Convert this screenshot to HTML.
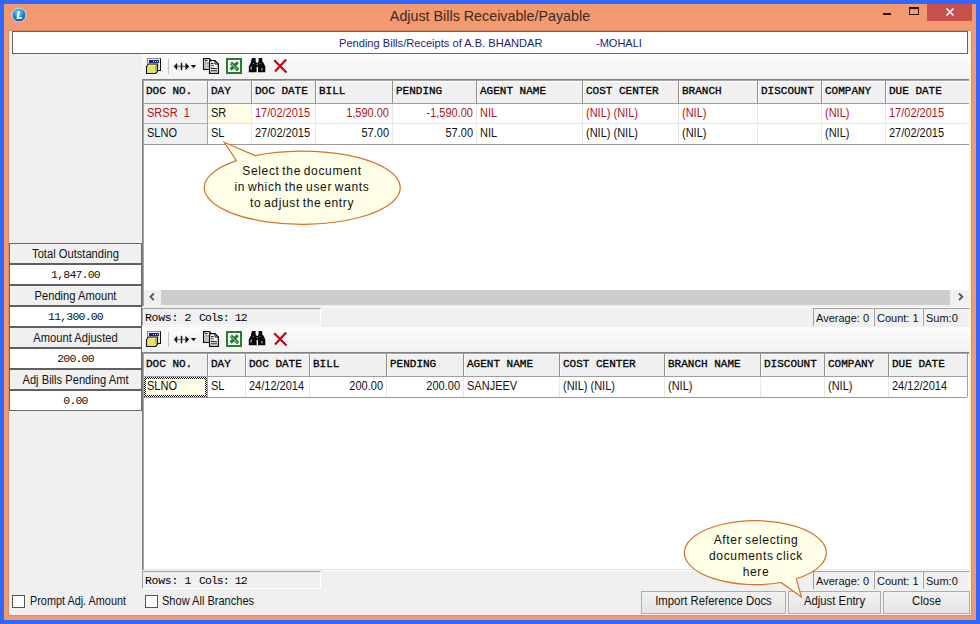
<!DOCTYPE html><html><head><meta charset="utf-8"><style>
*{box-sizing:border-box;margin:0;padding:0}
html,body{width:980px;height:624px;overflow:hidden;background:#3067ff;font-family:"Liberation Sans",sans-serif;position:relative}
div,span,svg{position:absolute}
.c{font-size:11px;white-space:nowrap;line-height:13px;color:#111}
.g{font-size:12px;white-space:nowrap;line-height:13px;color:#111;transform:scaleX(0.917);transform-origin:0 0}
.gr{transform-origin:100% 0}
.h{font-family:"Liberation Mono",monospace;font-size:11px;color:#000;-webkit-text-stroke:0.3px #000;line-height:13px;white-space:nowrap}
.m{font-family:"Liberation Mono",monospace;font-size:11px;line-height:13px;white-space:nowrap;color:#111}
.red{color:#b0121c}
.bx{background:#fff}
</style></head><body>
<div style="left:4px;top:4px;width:972px;height:616px;background:#f2996f;"></div>
<div style="left:8px;top:30px;width:964px;height:586px;background:#d98d68;"></div>
<div style="left:9px;top:31px;width:962px;height:584px;background:#f0f0f0;border:1px solid #fbf1ec"></div>
<div style="left:0;top:8px;width:980px;text-align:center;font-size:14.3px;line-height:17px;color:#3c2a20;white-space:nowrap">Adjust Bills Receivable/Payable</div>
<svg style="left:11px;top:7px" width="17" height="17" viewBox="0 0 17 17">
<defs><radialGradient id="ig" cx="0.45" cy="0.3" r="0.7"><stop offset="0" stop-color="#7fd0ff"/><stop offset="0.6" stop-color="#1a7fd0"/><stop offset="1" stop-color="#0b5aa8"/></radialGradient></defs>
<circle cx="8" cy="8" r="6.9" fill="url(#ig)" stroke="#e0eef5" stroke-width="0.8"/>
<path d="M6.8 4.2 L9 4.2 L8 9.9 L11.2 9.9 L10.8 11.8 L5.5 11.8 Z" fill="#f4ffff"/>
</svg>
<div style="left:883px;top:13px;width:8px;height:2px;background:#2a1208;"></div>
<div style="left:909px;top:7px;width:10px;height:8px;border:1px solid #2a1208;border-top-width:2px"></div>
<div style="left:927px;top:4px;width:45px;height:17px;background:#c7504b;"></div>
<svg style="left:945px;top:7px" width="10" height="10" viewBox="0 0 10 10"><path d="M1.5 1.5 L8.5 8.5 M8.5 1.5 L1.5 8.5" stroke="#fff" stroke-width="1.6"/></svg>
<div style="left:12px;top:31px;width:956px;height:23px;background:#fff;border:1px solid #646464"></div>
<div class="c" style="left:339px;top:37px;color:#1c1c84;font-size:11.1px">Pending Bills/Receipts of A.B. BHANDAR</div>
<div class="c" style="left:596px;top:37px;color:#1c1c84">-MOHALI</div>
<div style="left:9px;top:243px;width:133px;height:1px;background:#6a6a6a;"></div>
<div style="left:9px;top:244px;width:1px;height:40px;background:#6a6a6a;"></div>
<div style="left:141px;top:244px;width:1px;height:40px;background:#6a6a6a;"></div>
<div style="left:10px;top:244px;width:131px;height:19px;background:#f0f0f0;"></div>
<div style="left:9px;top:263px;width:133px;height:2px;background:#606060;"></div>
<div style="left:10px;top:265px;width:131px;height:19px;background:#fff;"></div>
<div style="left:9px;top:284px;width:133px;height:2px;background:#606060;"></div>
<div class="c" style="left:10px;width:131px;text-align:center;top:248px;font-size:12px;transform:scaleX(0.93);transform-origin:50% 0">Total Outstanding</div>
<div class="m" style="left:10px;width:131px;text-align:center;top:268px;font-size:11.5px;letter-spacing:-0.8px">1,847.00</div>
<div style="left:9px;top:286px;width:1px;height:40px;background:#6a6a6a;"></div>
<div style="left:141px;top:286px;width:1px;height:40px;background:#6a6a6a;"></div>
<div style="left:10px;top:286px;width:131px;height:19px;background:#f0f0f0;"></div>
<div style="left:9px;top:305px;width:133px;height:2px;background:#606060;"></div>
<div style="left:10px;top:307px;width:131px;height:19px;background:#fff;"></div>
<div style="left:9px;top:326px;width:133px;height:2px;background:#606060;"></div>
<div class="c" style="left:10px;width:131px;text-align:center;top:290px;font-size:12px;transform:scaleX(0.93);transform-origin:50% 0">Pending Amount</div>
<div class="m" style="left:10px;width:131px;text-align:center;top:310px;font-size:11.5px;letter-spacing:-0.8px">11,300.00</div>
<div style="left:9px;top:328px;width:1px;height:40px;background:#6a6a6a;"></div>
<div style="left:141px;top:328px;width:1px;height:40px;background:#6a6a6a;"></div>
<div style="left:10px;top:328px;width:131px;height:19px;background:#f0f0f0;"></div>
<div style="left:9px;top:347px;width:133px;height:2px;background:#606060;"></div>
<div style="left:10px;top:349px;width:131px;height:19px;background:#fff;"></div>
<div style="left:9px;top:368px;width:133px;height:2px;background:#606060;"></div>
<div class="c" style="left:10px;width:131px;text-align:center;top:332px;font-size:12px;transform:scaleX(0.93);transform-origin:50% 0">Amount Adjusted</div>
<div class="m" style="left:10px;width:131px;text-align:center;top:352px;font-size:11.5px;letter-spacing:-0.8px">200.00</div>
<div style="left:9px;top:370px;width:1px;height:40px;background:#6a6a6a;"></div>
<div style="left:141px;top:370px;width:1px;height:40px;background:#6a6a6a;"></div>
<div style="left:10px;top:370px;width:131px;height:19px;background:#f0f0f0;"></div>
<div style="left:9px;top:389px;width:133px;height:2px;background:#606060;"></div>
<div style="left:10px;top:391px;width:131px;height:19px;background:#fff;"></div>
<div style="left:9px;top:410px;width:133px;height:1px;background:#6a6a6a;"></div>
<div class="c" style="left:10px;width:131px;text-align:center;top:374px;font-size:12px;transform:scaleX(0.93);transform-origin:50% 0">Adj Bills Pending Amt</div>
<div class="m" style="left:10px;width:131px;text-align:center;top:394px;font-size:11.5px;letter-spacing:-0.8px">0.00</div>
<div style="left:142px;top:54px;width:828px;height:25px;background:linear-gradient(#fcfcfc,#f2f2f2);"></div>
<svg style="left:0;top:0px" width="300" height="80" viewBox="0 0 300 80">
<rect x="147.5" y="58.5" width="13" height="12" fill="#ececec" stroke="#111"/>
<path d="M147.5 70.5 V58.5 H160.5" fill="none" stroke="#909090"/>
<rect x="149" y="60" width="10" height="3" fill="#18208a"/>
<rect x="153" y="61" width="1" height="1" fill="#dde"/><rect x="155" y="61" width="1" height="1" fill="#dde"/><rect x="157" y="61" width="1" height="1" fill="#dde"/>
<path d="M146.5 66.5 L148.5 64 L157.5 64 L157.5 71.5 L155.5 73.5 L146.5 73.5 Z" fill="#e4e46a" stroke="#111" stroke-width="1.1"/>
<rect x="155" y="65" width="2" height="6" fill="#b8b838"/>
<rect x="148" y="65" width="7" height="1" fill="#f4f4a0"/>
<rect x="168" y="59" width="1" height="15" fill="#c4c4c4"/>
<rect x="176" y="65.6" width="10" height="1.6" fill="#888"/>
<path d="M173.8 66.5 L177.2 62.8 L177.2 70.2 Z" fill="#111"/>
<path d="M189.2 66.5 L185.5 62.8 L185.5 70.2 Z" fill="#111"/>
<rect x="180.8" y="62.8" width="1.4" height="7.4" fill="#111"/>
<path d="M190.8 65 L196.2 65 L193.5 68.2 Z" fill="#111"/>
<path d="M203.6 58.6 H209.4 L211 60.2 V69.4 H203.6 Z" fill="#fff" stroke="#111" stroke-width="1.3"/>
<rect x="205" y="60" width="2.5" height="1.2" fill="#222"/>
<rect x="205" y="62.5" width="4" height="1" fill="#666"/><rect x="205" y="64.5" width="4" height="1" fill="#888"/><rect x="205" y="66.5" width="4" height="1" fill="#888"/>
<path d="M209.6 60.6 H215 L218.4 64 V73.4 H209.6 Z" fill="#fff" stroke="#111" stroke-width="1.3"/>
<path d="M215 60.6 V64 H218.4" fill="none" stroke="#111" stroke-width="1"/>
<rect x="211" y="63" width="2.5" height="1.2" fill="#222"/>
<rect x="211" y="65" width="3" height="1" fill="#777"/><rect x="211" y="66.5" width="3" height="1" fill="#999"/>
<rect x="211" y="68" width="6" height="1.2" fill="#333"/><rect x="211" y="70.2" width="6" height="1.2" fill="#333"/>
<rect x="227" y="59" width="14" height="14" fill="#fff" stroke="#2a7a34" stroke-width="2"/>
<path d="M230.8 62.8 L238.2 70.2" stroke="#237a2e" stroke-width="3.4"/>
<path d="M237.8 62.2 L230.6 69.6" stroke="#237a2e" stroke-width="3"/>
<path d="M230.8 63.2 L237.2 69.6" stroke="#cfe8cf" stroke-width="0.9"/>
<path d="M252 58 H255.6 V61.2 L256.6 62.2 V72.2 H248.8 V66.5 L251 62.2 V61.2 Z" fill="#0a0a0a"/>
<path d="M258.6 58 H262.2 V61.2 L263.2 62.2 L265.3 66.5 V72.2 H258 V62.2 L258.6 61.2 Z" fill="#0a0a0a"/>
<rect x="256" y="63" width="2.5" height="4" fill="#0a0a0a"/>
<rect x="250.6" y="66.5" width="1" height="3" fill="#d8d8d8"/><rect x="261.4" y="68" width="1" height="2.5" fill="#c8c8c8"/>
<rect x="253" y="63" width="1" height="1" fill="#888"/><rect x="259.5" y="63" width="1" height="1" fill="#888"/><rect x="256.6" y="64" width="1.2" height="1.2" fill="#999"/>
<path d="M274.2 60.2 L286.5 72.5" stroke="#c00014" stroke-width="2.1"/>
<path d="M286.2 59.5 L275 71.5" stroke="#c00014" stroke-width="2.1"/>
</svg>
<div style="left:142px;top:327px;width:828px;height:25px;background:linear-gradient(#fcfcfc,#f2f2f2);"></div>
<svg style="left:0;top:273px" width="300" height="80" viewBox="0 0 300 80">
<rect x="147.5" y="58.5" width="13" height="12" fill="#ececec" stroke="#111"/>
<path d="M147.5 70.5 V58.5 H160.5" fill="none" stroke="#909090"/>
<rect x="149" y="60" width="10" height="3" fill="#18208a"/>
<rect x="153" y="61" width="1" height="1" fill="#dde"/><rect x="155" y="61" width="1" height="1" fill="#dde"/><rect x="157" y="61" width="1" height="1" fill="#dde"/>
<path d="M146.5 66.5 L148.5 64 L157.5 64 L157.5 71.5 L155.5 73.5 L146.5 73.5 Z" fill="#e4e46a" stroke="#111" stroke-width="1.1"/>
<rect x="155" y="65" width="2" height="6" fill="#b8b838"/>
<rect x="148" y="65" width="7" height="1" fill="#f4f4a0"/>
<rect x="168" y="59" width="1" height="15" fill="#c4c4c4"/>
<rect x="176" y="65.6" width="10" height="1.6" fill="#888"/>
<path d="M173.8 66.5 L177.2 62.8 L177.2 70.2 Z" fill="#111"/>
<path d="M189.2 66.5 L185.5 62.8 L185.5 70.2 Z" fill="#111"/>
<rect x="180.8" y="62.8" width="1.4" height="7.4" fill="#111"/>
<path d="M190.8 65 L196.2 65 L193.5 68.2 Z" fill="#111"/>
<path d="M203.6 58.6 H209.4 L211 60.2 V69.4 H203.6 Z" fill="#fff" stroke="#111" stroke-width="1.3"/>
<rect x="205" y="60" width="2.5" height="1.2" fill="#222"/>
<rect x="205" y="62.5" width="4" height="1" fill="#666"/><rect x="205" y="64.5" width="4" height="1" fill="#888"/><rect x="205" y="66.5" width="4" height="1" fill="#888"/>
<path d="M209.6 60.6 H215 L218.4 64 V73.4 H209.6 Z" fill="#fff" stroke="#111" stroke-width="1.3"/>
<path d="M215 60.6 V64 H218.4" fill="none" stroke="#111" stroke-width="1"/>
<rect x="211" y="63" width="2.5" height="1.2" fill="#222"/>
<rect x="211" y="65" width="3" height="1" fill="#777"/><rect x="211" y="66.5" width="3" height="1" fill="#999"/>
<rect x="211" y="68" width="6" height="1.2" fill="#333"/><rect x="211" y="70.2" width="6" height="1.2" fill="#333"/>
<rect x="227" y="59" width="14" height="14" fill="#fff" stroke="#2a7a34" stroke-width="2"/>
<path d="M230.8 62.8 L238.2 70.2" stroke="#237a2e" stroke-width="3.4"/>
<path d="M237.8 62.2 L230.6 69.6" stroke="#237a2e" stroke-width="3"/>
<path d="M230.8 63.2 L237.2 69.6" stroke="#cfe8cf" stroke-width="0.9"/>
<path d="M252 58 H255.6 V61.2 L256.6 62.2 V72.2 H248.8 V66.5 L251 62.2 V61.2 Z" fill="#0a0a0a"/>
<path d="M258.6 58 H262.2 V61.2 L263.2 62.2 L265.3 66.5 V72.2 H258 V62.2 L258.6 61.2 Z" fill="#0a0a0a"/>
<rect x="256" y="63" width="2.5" height="4" fill="#0a0a0a"/>
<rect x="250.6" y="66.5" width="1" height="3" fill="#d8d8d8"/><rect x="261.4" y="68" width="1" height="2.5" fill="#c8c8c8"/>
<rect x="253" y="63" width="1" height="1" fill="#888"/><rect x="259.5" y="63" width="1" height="1" fill="#888"/><rect x="256.6" y="64" width="1.2" height="1.2" fill="#999"/>
<path d="M274.2 60.2 L286.5 72.5" stroke="#c00014" stroke-width="2.1"/>
<path d="M286.2 59.5 L275 71.5" stroke="#c00014" stroke-width="2.1"/>
</svg>
<div style="left:142px;top:79px;width:827px;height:227px;background:#fff;"></div>
<div style="left:142px;top:79px;width:827px;height:1px;background:#828282;"></div>
<div style="left:142px;top:80px;width:827px;height:1px;background:#a4a4a4;"></div>
<div style="left:142px;top:79px;width:1px;height:227px;background:#828282;"></div>
<div style="left:143px;top:80px;width:1px;height:226px;background:#a4a4a4;"></div>
<div style="left:144px;top:81px;width:825px;height:22px;background:#f0f0f0;"></div>
<div style="left:144px;top:81px;width:825px;height:1px;background:#fff;"></div>
<div style="left:144px;top:81px;width:1px;height:22px;background:#fafafa;"></div>
<div class="h" style="left:146px;top:85px;">DOC NO.</div>
<div class="h" style="left:211px;top:85px;">DAY</div>
<div class="h" style="left:255px;top:85px;">DOC DATE</div>
<div class="h" style="left:319px;top:85px;">BILL</div>
<div class="h" style="left:396px;top:85px;">PENDING</div>
<div class="h" style="left:480px;top:85px;">AGENT NAME</div>
<div class="h" style="left:586px;top:85px;">COST CENTER</div>
<div class="h" style="left:682px;top:85px;">BRANCH</div>
<div class="h" style="left:761px;top:85px;">DISCOUNT</div>
<div class="h" style="left:825px;top:85px;">COMPANY</div>
<div class="h" style="left:889px;top:85px;">DUE DATE</div>
<div style="left:144px;top:103px;width:825px;height:1px;background:#a0a0a0;"></div>
<div style="left:144px;top:104px;width:63px;height:19px;background:#f0f0f0;"></div>
<div class="g red" style="left:147px;top:107px;">SRSR&nbsp; 1</div>
<div style="left:208px;top:104px;width:43px;height:19px;background:#fffde6;"></div>
<div class="g " style="left:211px;top:107px;">SR</div>
<div class="g red" style="left:255px;top:107px;">17/02/2015</div>
<div class="g gr red" style="left:315px;width:74px;text-align:right;top:107px">1,590.00</div>
<div class="g gr red" style="left:392px;width:81px;text-align:right;top:107px">-1,590.00</div>
<div class="g red" style="left:480px;top:107px;">NIL</div>
<div class="g red" style="left:586px;top:107px;">(NIL) (NIL)</div>
<div class="g red" style="left:682px;top:107px;">(NIL)</div>
<div class="g red" style="left:825px;top:107px;">(NIL)</div>
<div class="g red" style="left:889px;top:107px;">17/02/2015</div>
<div style="left:144px;top:123px;width:825px;height:1px;background:#e2e2e2;"></div>
<div style="left:144px;top:123px;width:63px;height:1px;background:#b0b0b0;"></div>
<div style="left:144px;top:124px;width:63px;height:20px;background:#f0f0f0;"></div>
<div class="g " style="left:147px;top:127px;">SLNO</div>
<div class="g " style="left:211px;top:127px;">SL</div>
<div class="g " style="left:255px;top:127px;">27/02/2015</div>
<div class="g gr " style="left:315px;width:74px;text-align:right;top:127px">57.00</div>
<div class="g gr " style="left:392px;width:81px;text-align:right;top:127px">57.00</div>
<div class="g " style="left:480px;top:127px;">NIL</div>
<div class="g " style="left:586px;top:127px;">(NIL) (NIL)</div>
<div class="g " style="left:682px;top:127px;">(NIL)</div>
<div class="g " style="left:825px;top:127px;">(NIL)</div>
<div class="g " style="left:889px;top:127px;">27/02/2015</div>
<div style="left:144px;top:144px;width:825px;height:1px;background:#e2e2e2;"></div>
<div style="left:144px;top:144px;width:63px;height:1px;background:#b0b0b0;"></div>
<div style="left:207px;top:81px;width:1px;height:22px;background:#909090;"></div>
<div style="left:208px;top:81px;width:1px;height:22px;background:#fafafa;"></div>
<div style="left:207px;top:104px;width:1px;height:41px;background:#a8a8a8;"></div>
<div style="left:251px;top:81px;width:1px;height:22px;background:#909090;"></div>
<div style="left:252px;top:81px;width:1px;height:22px;background:#fafafa;"></div>
<div style="left:251px;top:104px;width:1px;height:41px;background:#e8e8e8;"></div>
<div style="left:315px;top:81px;width:1px;height:22px;background:#909090;"></div>
<div style="left:316px;top:81px;width:1px;height:22px;background:#fafafa;"></div>
<div style="left:315px;top:104px;width:1px;height:41px;background:#e8e8e8;"></div>
<div style="left:392px;top:81px;width:1px;height:22px;background:#909090;"></div>
<div style="left:393px;top:81px;width:1px;height:22px;background:#fafafa;"></div>
<div style="left:392px;top:104px;width:1px;height:41px;background:#e8e8e8;"></div>
<div style="left:476px;top:81px;width:1px;height:22px;background:#909090;"></div>
<div style="left:477px;top:81px;width:1px;height:22px;background:#fafafa;"></div>
<div style="left:476px;top:104px;width:1px;height:41px;background:#e8e8e8;"></div>
<div style="left:582px;top:81px;width:1px;height:22px;background:#909090;"></div>
<div style="left:583px;top:81px;width:1px;height:22px;background:#fafafa;"></div>
<div style="left:582px;top:104px;width:1px;height:41px;background:#e8e8e8;"></div>
<div style="left:678px;top:81px;width:1px;height:22px;background:#909090;"></div>
<div style="left:679px;top:81px;width:1px;height:22px;background:#fafafa;"></div>
<div style="left:678px;top:104px;width:1px;height:41px;background:#e8e8e8;"></div>
<div style="left:757px;top:81px;width:1px;height:22px;background:#909090;"></div>
<div style="left:758px;top:81px;width:1px;height:22px;background:#fafafa;"></div>
<div style="left:757px;top:104px;width:1px;height:41px;background:#e8e8e8;"></div>
<div style="left:821px;top:81px;width:1px;height:22px;background:#909090;"></div>
<div style="left:822px;top:81px;width:1px;height:22px;background:#fafafa;"></div>
<div style="left:821px;top:104px;width:1px;height:41px;background:#e8e8e8;"></div>
<div style="left:885px;top:81px;width:1px;height:22px;background:#909090;"></div>
<div style="left:886px;top:81px;width:1px;height:22px;background:#fafafa;"></div>
<div style="left:885px;top:104px;width:1px;height:41px;background:#e8e8e8;"></div>
<div style="left:144px;top:144px;width:825px;height:1px;background:#999;"></div>
<div style="left:144px;top:290px;width:825px;height:16px;background:#f0f0f0;"></div>
<div style="left:161px;top:290px;width:789px;height:15px;background:#cdcdcd;"></div>
<svg style="left:148px;top:292px" width="8" height="9" viewBox="0 0 8 9"><path d="M5.8 1.5 L2.5 4.8 L5.8 8" fill="none" stroke="#555" stroke-width="1.8"/></svg>
<svg style="left:957px;top:292px" width="8" height="9" viewBox="0 0 8 9"><path d="M2 1.5 L5.3 4.8 L2 8" fill="none" stroke="#555" stroke-width="1.8"/></svg>
<div style="left:142px;top:308px;width:179px;height:18px;background:#f0f0f0;border-top:1px solid #a0a0a0;border-left:1px solid #a0a0a0;border-right:1px solid #fff;border-bottom:1px solid #fff"></div>
<div class="m" style="left:145px;top:311px;font-size:11.5px;letter-spacing:-0.3px;color:#000">Rows: 2</div>
<div class="m" style="left:199px;top:311px;font-size:11.5px;letter-spacing:-0.95px;color:#000">Cols: 12</div>
<div style="left:322px;top:307px;width:647px;height:1px;background:#fcfcfc;"></div>
<div style="left:322px;top:308px;width:647px;height:19px;background:#f0f0f0;"></div>
<div style="left:813px;top:308px;width:61px;height:18px;background:#f0f0f0;border-top:1px solid #a0a0a0;border-left:1px solid #a0a0a0;border-right:1px solid #fafafa"></div>
<div class="c" style="left:816px;top:312px;">Average: 0</div>
<div style="left:874px;top:308px;width:49px;height:18px;background:#f0f0f0;border-top:1px solid #a0a0a0;border-left:1px solid #a0a0a0;border-right:1px solid #fafafa"></div>
<div class="c" style="left:877px;top:312px;">Count: 1</div>
<div style="left:923px;top:308px;width:47px;height:18px;background:#f0f0f0;border-top:1px solid #a0a0a0;border-left:1px solid #a0a0a0;border-right:1px solid #fafafa"></div>
<div class="c" style="left:926px;top:312px;">Sum:0</div>
<div style="left:142px;top:352px;width:827px;height:218px;background:#fff;"></div>
<div style="left:142px;top:352px;width:827px;height:1px;background:#828282;"></div>
<div style="left:142px;top:353px;width:827px;height:1px;background:#a4a4a4;"></div>
<div style="left:142px;top:352px;width:1px;height:218px;background:#828282;"></div>
<div style="left:143px;top:353px;width:1px;height:217px;background:#a4a4a4;"></div>
<div style="left:144px;top:354px;width:823px;height:22px;background:#f0f0f0;"></div>
<div style="left:144px;top:354px;width:823px;height:1px;background:#fff;"></div>
<div style="left:144px;top:354px;width:1px;height:22px;background:#fafafa;"></div>
<div class="h" style="left:146px;top:358px;">DOC NO.</div>
<div class="h" style="left:211px;top:358px;">DAY</div>
<div class="h" style="left:249px;top:358px;">DOC DATE</div>
<div class="h" style="left:313px;top:358px;">BILL</div>
<div class="h" style="left:390px;top:358px;">PENDING</div>
<div class="h" style="left:467px;top:358px;">AGENT NAME</div>
<div class="h" style="left:563px;top:358px;">COST CENTER</div>
<div class="h" style="left:668px;top:358px;">BRANCH NAME</div>
<div class="h" style="left:764px;top:358px;">DISCOUNT</div>
<div class="h" style="left:828px;top:358px;">COMPANY</div>
<div class="h" style="left:892px;top:358px;">DUE DATE</div>
<div style="left:144px;top:376px;width:823px;height:1px;background:#a0a0a0;"></div>
<div style="left:144px;top:377px;width:63px;height:20px;background:repeating-conic-gradient(#111 0 25%, #fffde8 0 50%) 0 0/2px 2px;"></div>
<div style="left:146px;top:379px;width:59px;height:16px;background:#fffde8;"></div>
<div class="g " style="left:147px;top:380px;">SLNO</div>
<div class="g " style="left:211px;top:380px;">SL</div>
<div class="g " style="left:249px;top:380px;">24/12/2014</div>
<div class="g gr " style="left:309px;width:74px;text-align:right;top:380px">200.00</div>
<div class="g gr " style="left:386px;width:74px;text-align:right;top:380px">200.00</div>
<div class="g " style="left:467px;top:380px;">SANJEEV</div>
<div class="g " style="left:563px;top:380px;">(NIL) (NIL)</div>
<div class="g " style="left:668px;top:380px;">(NIL)</div>
<div class="g " style="left:828px;top:380px;">(NIL)</div>
<div class="g " style="left:892px;top:380px;">24/12/2014</div>
<div style="left:144px;top:397px;width:823px;height:1px;background:#e2e2e2;"></div>
<div style="left:144px;top:397px;width:63px;height:1px;background:#b0b0b0;"></div>
<div style="left:207px;top:354px;width:1px;height:22px;background:#909090;"></div>
<div style="left:208px;top:354px;width:1px;height:22px;background:#fafafa;"></div>
<div style="left:207px;top:377px;width:1px;height:21px;background:#a8a8a8;"></div>
<div style="left:245px;top:354px;width:1px;height:22px;background:#909090;"></div>
<div style="left:246px;top:354px;width:1px;height:22px;background:#fafafa;"></div>
<div style="left:245px;top:377px;width:1px;height:21px;background:#e8e8e8;"></div>
<div style="left:309px;top:354px;width:1px;height:22px;background:#909090;"></div>
<div style="left:310px;top:354px;width:1px;height:22px;background:#fafafa;"></div>
<div style="left:309px;top:377px;width:1px;height:21px;background:#e8e8e8;"></div>
<div style="left:386px;top:354px;width:1px;height:22px;background:#909090;"></div>
<div style="left:387px;top:354px;width:1px;height:22px;background:#fafafa;"></div>
<div style="left:386px;top:377px;width:1px;height:21px;background:#e8e8e8;"></div>
<div style="left:463px;top:354px;width:1px;height:22px;background:#909090;"></div>
<div style="left:464px;top:354px;width:1px;height:22px;background:#fafafa;"></div>
<div style="left:463px;top:377px;width:1px;height:21px;background:#e8e8e8;"></div>
<div style="left:559px;top:354px;width:1px;height:22px;background:#909090;"></div>
<div style="left:560px;top:354px;width:1px;height:22px;background:#fafafa;"></div>
<div style="left:559px;top:377px;width:1px;height:21px;background:#e8e8e8;"></div>
<div style="left:664px;top:354px;width:1px;height:22px;background:#909090;"></div>
<div style="left:665px;top:354px;width:1px;height:22px;background:#fafafa;"></div>
<div style="left:664px;top:377px;width:1px;height:21px;background:#e8e8e8;"></div>
<div style="left:760px;top:354px;width:1px;height:22px;background:#909090;"></div>
<div style="left:761px;top:354px;width:1px;height:22px;background:#fafafa;"></div>
<div style="left:760px;top:377px;width:1px;height:21px;background:#e8e8e8;"></div>
<div style="left:824px;top:354px;width:1px;height:22px;background:#909090;"></div>
<div style="left:825px;top:354px;width:1px;height:22px;background:#fafafa;"></div>
<div style="left:824px;top:377px;width:1px;height:21px;background:#e8e8e8;"></div>
<div style="left:888px;top:354px;width:1px;height:22px;background:#909090;"></div>
<div style="left:889px;top:354px;width:1px;height:22px;background:#fafafa;"></div>
<div style="left:888px;top:377px;width:1px;height:21px;background:#e8e8e8;"></div>
<div style="left:144px;top:397px;width:823px;height:1px;background:#999;"></div>
<div style="left:967px;top:354px;width:1px;height:43px;background:#a0a0a0;"></div>
<div style="left:144px;top:569px;width:825px;height:1px;background:#e6e6e6;"></div>
<div style="left:142px;top:571px;width:179px;height:18px;background:#f0f0f0;border-top:1px solid #a0a0a0;border-left:1px solid #a0a0a0;border-right:1px solid #fff;border-bottom:1px solid #fff"></div>
<div class="m" style="left:145px;top:574px;font-size:11.5px;letter-spacing:-0.3px;color:#000">Rows: 1</div>
<div class="m" style="left:199px;top:574px;font-size:11.5px;letter-spacing:-0.95px;color:#000">Cols: 12</div>
<div style="left:322px;top:570px;width:647px;height:1px;background:#fcfcfc;"></div>
<div style="left:322px;top:571px;width:647px;height:19px;background:#f0f0f0;"></div>
<div style="left:813px;top:571px;width:61px;height:18px;background:#f0f0f0;border-top:1px solid #a0a0a0;border-left:1px solid #a0a0a0;border-right:1px solid #fafafa"></div>
<div class="c" style="left:816px;top:575px;">Average: 0</div>
<div style="left:874px;top:571px;width:49px;height:18px;background:#f0f0f0;border-top:1px solid #a0a0a0;border-left:1px solid #a0a0a0;border-right:1px solid #fafafa"></div>
<div class="c" style="left:877px;top:575px;">Count: 1</div>
<div style="left:923px;top:571px;width:47px;height:18px;background:#f0f0f0;border-top:1px solid #a0a0a0;border-left:1px solid #a0a0a0;border-right:1px solid #fafafa"></div>
<div class="c" style="left:926px;top:575px;">Sum:0</div>
<div style="left:12px;top:595px;width:13px;height:13px;background:#fff;border:1px solid #555"></div>
<div class="c" style="left:30px;top:595px;font-size:12px;transform:scaleX(0.905);transform-origin:0 0">Prompt Adj. Amount</div>
<div style="left:145px;top:595px;width:13px;height:13px;background:#fff;border:1px solid #555"></div>
<div class="c" style="left:162px;top:595px;font-size:12px;transform:scaleX(0.92);transform-origin:0 0">Show All Branches</div>
<div style="left:641px;top:591px;width:145px;height:23px;border:1px solid #acacac;background:linear-gradient(#f2f2f2,#e4e4e4)"></div>
<div class="c" style="left:641px;width:145px;text-align:center;top:595px;font-size:12px;transform:scaleX(0.945);transform-origin:50% 0">Import Reference Docs</div>
<div style="left:788px;top:591px;width:93px;height:23px;border:1px solid #acacac;background:linear-gradient(#f2f2f2,#e4e4e4)"></div>
<div class="c" style="left:788px;width:93px;text-align:center;top:595px;font-size:12px;transform:scaleX(0.945);transform-origin:50% 0">Adjust Entry</div>
<div style="left:883px;top:591px;width:87px;height:23px;border:1px solid #acacac;background:linear-gradient(#f2f2f2,#e4e4e4)"></div>
<div class="c" style="left:883px;width:87px;text-align:center;top:595px;font-size:12px;transform:scaleX(0.945);transform-origin:50% 0">Close</div>
<svg style="left:0;top:0" width="980" height="624" viewBox="0 0 980 624">
<path d="M255.2 155.6 L224.5 142.5 L236.4 160.6 A98 36.6 0 1 0 255.2 155.6 Z" fill="#fffee6" stroke="#d8722a" stroke-width="1.2" stroke-linejoin="miter"/>
<path d="M796.3 578.8 L801.5 597 L781.0 582.5 A71 32 0 1 1 796.3 578.8 Z" fill="#fffee6" stroke="#d8722a" stroke-width="1.2" stroke-linejoin="miter"/>
</svg>
<div style="left:202px;width:200px;text-align:center;top:164px;font-size:12px;line-height:14px;color:#111;white-space:nowrap;letter-spacing:0.65px;word-spacing:-1.2px">Select the document</div>
<div style="left:202px;width:200px;text-align:center;top:180px;font-size:12px;line-height:14px;color:#111;white-space:nowrap;letter-spacing:0.65px;word-spacing:-1.2px">in which the user wants</div>
<div style="left:202px;width:200px;text-align:center;top:196px;font-size:12px;line-height:14px;color:#111;white-space:nowrap;letter-spacing:0.65px;word-spacing:-1.2px">to adjust the entry</div>
<div style="left:685px;width:142px;text-align:center;top:533px;font-size:12px;line-height:14px;color:#111;white-space:nowrap;letter-spacing:0.65px;word-spacing:-1.2px">After selecting</div>
<div style="left:685px;width:142px;text-align:center;top:549px;font-size:12px;line-height:14px;color:#111;white-space:nowrap;letter-spacing:0.65px;word-spacing:-1.2px">documents click</div>
<div style="left:685px;width:142px;text-align:center;top:565px;font-size:12px;line-height:14px;color:#111;white-space:nowrap;letter-spacing:0.65px;word-spacing:-1.2px">here</div>
</body></html>
